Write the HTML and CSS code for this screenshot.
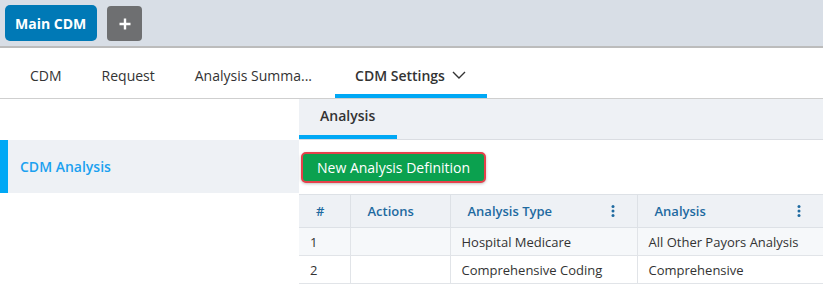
FILE: index.html
```html
<!DOCTYPE html>
<html lang="en">
<head>
    <meta charset="UTF-8">
    <meta name="viewport" content="width=device-width, initial-scale=1.0">
    <title>CDM Settings</title>
    <link rel="stylesheet" href="styles.css">
</head>
<body>
    <div class="topbar">
        <button class="btn-main">Main CDM</button>
        <button class="btn-add">
            <svg width="12" height="12" viewBox="0 0 12 12"><path d="M6 0.5v11M0.5 6h11" stroke="#fff" stroke-width="2.4"/></svg>
        </button>
    </div>

    <nav class="tabs">
        <div class="tab">CDM</div>
        <div class="tab">Request</div>
        <div class="tab tab-long">Analysis Summa...</div>
        <div class="tab active">CDM Settings
            <svg class="chevron" width="14" height="8" viewBox="0 0 14 8"><path d="M1 1l6 6 6-6" fill="none" stroke="#333" stroke-width="1.4"/></svg>
        </div>
    </nav>

    <div class="main">
        <aside class="sidebar">
            <div class="side-item">CDM Analysis</div>
        </aside>

        <section class="content">
            <div class="subtabs">
                <div class="subtab active">Analysis</div>
            </div>

            <div class="toolbar">
                <button class="btn-new">New Analysis Definition</button>
            </div>

            <table class="grid">
                <colgroup>
                    <col style="width:51px">
                    <col style="width:100px">
                    <col style="width:187px">
                    <col style="width:186px">
                </colgroup>
                <thead>
                    <tr>
                        <th>#</th>
                        <th>Actions</th>
                        <th><div class="th-inner">Analysis Type
                            <svg width="4" height="12" viewBox="0 0 4 12"><circle cx="2" cy="1.6" r="1.5" fill="#1e6aa0"/><circle cx="2" cy="6" r="1.5" fill="#1e6aa0"/><circle cx="2" cy="10.4" r="1.5" fill="#1e6aa0"/></svg>
                        </div></th>
                        <th><div class="th-inner">Analysis
                            <svg width="4" height="12" viewBox="0 0 4 12"><circle cx="2" cy="1.6" r="1.5" fill="#1e6aa0"/><circle cx="2" cy="6" r="1.5" fill="#1e6aa0"/><circle cx="2" cy="10.4" r="1.5" fill="#1e6aa0"/></svg>
                        </div></th>
                    </tr>
                </thead>
                <tbody>
                    <tr>
                        <td>1</td>
                        <td></td>
                        <td>Hospital Medicare</td>
                        <td>All Other Payors Analysis</td>
                    </tr>
                    <tr>
                        <td>2</td>
                        <td></td>
                        <td>Comprehensive Coding</td>
                        <td>Comprehensive</td>
                    </tr>
                </tbody>
            </table>
        </section>
    </div>
</body>
</html>
```

FILE: styles.css
```css
body {
    margin: 0;
    font-family: "Open Sans", "Liberation Sans", sans-serif;
    font-size: 14px;
    color: #333;
    background: #fff;
    overflow: hidden;
}
button {
    font-family: inherit;
    border: none;
    cursor: pointer;
}
.topbar {
    height: 48px;
    box-sizing: border-box;
    background: #d8dee6;
    border-bottom: 2px solid #bcbcbc;
    padding: 5px;
    display: flex;
    align-items: flex-start;
    gap: 10px;
}
.btn-main {
    height: 36px;
    padding: 0 11px 0 10px;
    background: #0079b6;
    color: #fff;
    font-size: 14px;
    font-weight: 700;
    border-radius: 5px;
}
.btn-add {
    width: 35px;
    height: 35px;
    margin-top: 1px;
    background: #6e6f71;
    border-radius: 4px;
    display: flex;
    align-items: center;
    justify-content: center;
    padding: 0;
}
.tabs {
    display: flex;
    height: 50px;
    padding-left: 10px;
    border-bottom: 1px solid #cfcfcf;
}
.tab {
    height: 50px;
    box-sizing: border-box;
    padding: 18px 20px 0;
    line-height: 20px;
    border-bottom: 4px solid transparent;
    white-space: nowrap;
}
.tab-long {
    padding-right: 23px;
}
.tab.active {
    font-weight: 600;
    padding-right: 21px;
    border-bottom-color: #00a8f5;
}
.chevron {
    margin-left: 3px;
    vertical-align: 2px;
}
.main {
    display: flex;
}
.sidebar {
    width: 299px;
    flex-shrink: 0;
    padding-top: 41px;
}
.side-item {
    height: 53px;
    box-sizing: border-box;
    background: #eef1f5;
    border-left: 8px solid #00a8f5;
    padding-left: 12px;
    display: flex;
    align-items: center;
    color: #1ba1f0;
    font-weight: 600;
}
.content {
    flex: 1;
}
.subtabs {
    height: 41px;
    box-sizing: border-box;
    background: #eef1f5;
    border-bottom: 1px solid #dadde2;
    display: flex;
}
.subtab {
    height: 40px;
    box-sizing: border-box;
    padding: 7px 22px 0 21px;
    line-height: 20px;
    font-weight: 600;
    border-bottom: 4px solid transparent;
}
.subtab.active {
    border-bottom-color: #00a8f5;
}
.toolbar {
    padding: 12px 0 11px 2px;
}
.btn-new {
    height: 31px;
    padding: 0 14px;
    background: #0ba14f;
    color: #fff;
    font-size: 14px;
    border: 2px solid #e6404a;
    border-radius: 5px;
    box-shadow: 0 1px 3px rgba(0,0,0,0.25);
}
.grid {
    width: 524px;
    table-layout: fixed;
    border-collapse: collapse;
    font-size: 13px;
}
.grid th {
    height: 32px;
    padding: 0 22px 0 17px;
    text-align: left;
    font-weight: 600;
    color: #1e6aa0;
    background: #eef1f5;
    border-top: 1px solid #dde1e6;
    border-bottom: 1px solid #dde1e6;
    border-right: 1px solid #dde1e6;
}
.th-inner {
    display: flex;
    justify-content: space-between;
    align-items: center;
}
.grid td {
    height: 27px;
    padding: 0 11px;
    border-bottom: 1px solid #e1e4e8;
    border-right: 1px solid #e1e4e8;
    white-space: nowrap;
}
.grid tbody tr:nth-child(odd) {
    background: #f6f8fa;
}
```
